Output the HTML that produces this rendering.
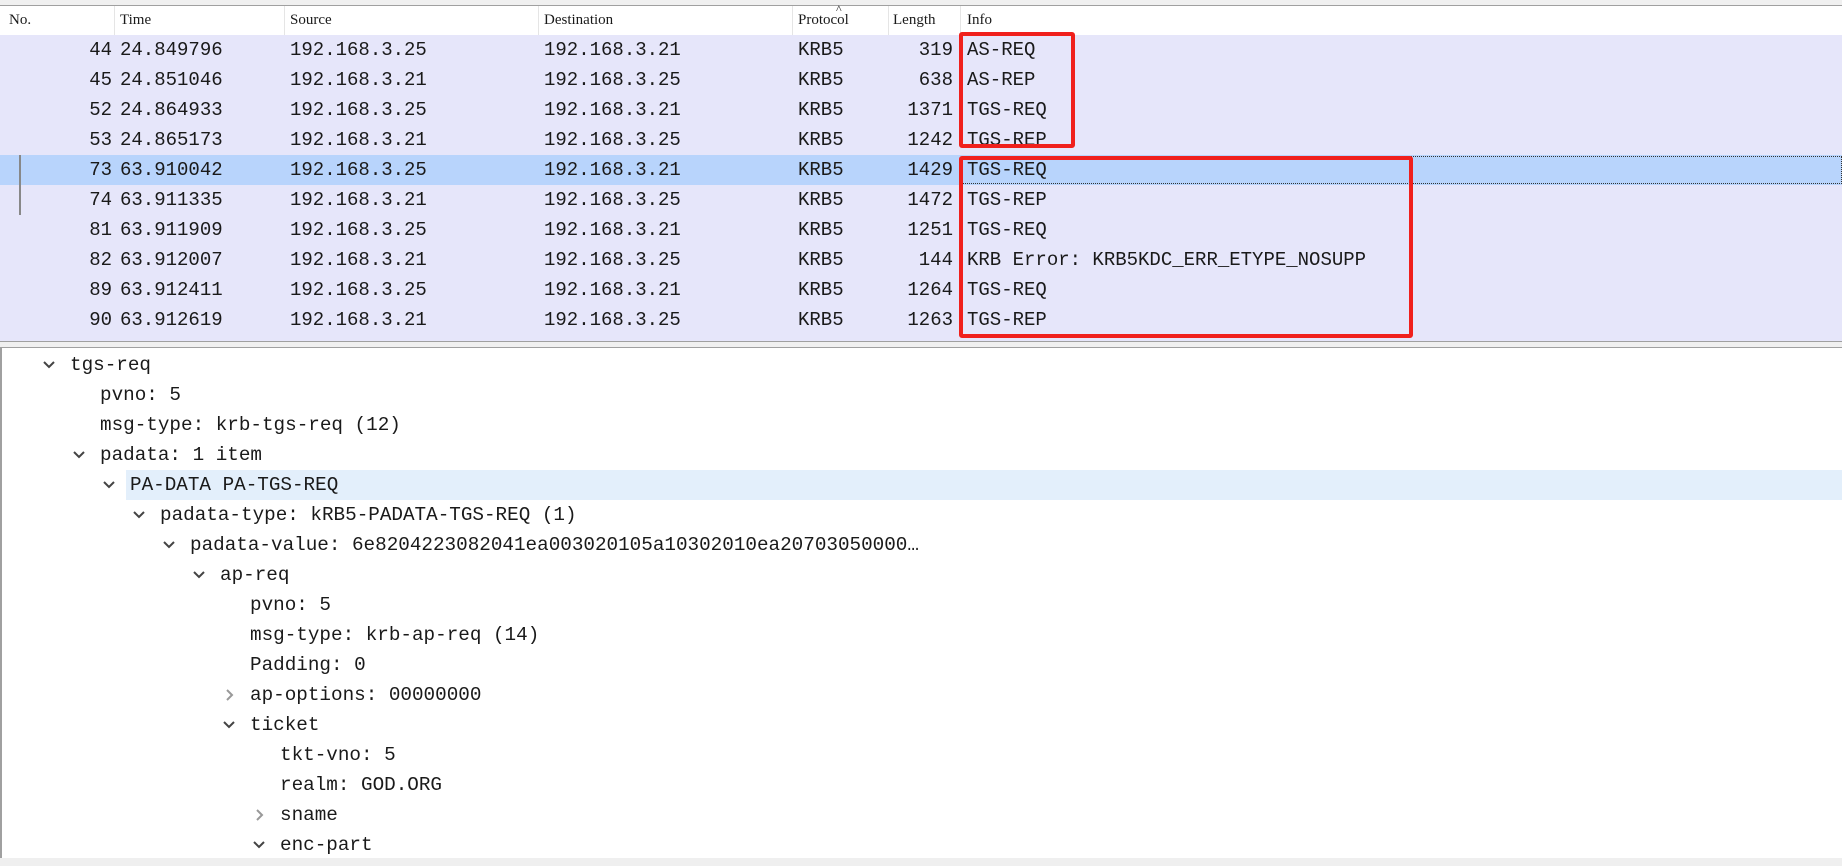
<!DOCTYPE html>
<html><head><meta charset="utf-8"><style>
*{margin:0;padding:0;box-sizing:border-box}
body{width:1842px;height:866px;overflow:hidden;background:#fff;position:relative;font-family:"Liberation Mono",monospace;color:#1a1a1a}
.top{position:absolute;left:0;top:0;width:1842px;height:6px;background:#f0f0f0;border-bottom:1px solid #a0a0a0}
.hdr{position:absolute;left:0;top:6px;width:1842px;height:29px;background:#fff;font-family:"Liberation Serif",serif;font-size:15px}
.hdr span{position:absolute;top:6px}
.sep{position:absolute;top:6px;width:1px;height:29px;background:#e5e5e5}
.list{position:absolute;left:0;top:35px;width:1842px;height:306px;overflow:hidden;background:#e6e6fa;font-size:19px}
.row{position:absolute;left:0;width:1842px;height:30px;line-height:30px;white-space:pre}
.row span{position:absolute;top:0}
.sel{background:#b8d4fc}
.r{text-align:right}
.split{position:absolute;left:0;top:341px;width:1842px;height:7px;background:#f0f0f0;border-top:1px solid #a0a0a0;border-bottom:1px solid #a0a0a0}
.det{position:absolute;left:0;top:348px;width:1842px;height:510px;border-left:2px solid #a0a0a0;font-size:19.3px}
.d{position:absolute;height:30px;line-height:30px;white-space:pre}
.box{position:absolute;border:4px solid #f0201c;border-radius:3px}
.bot{position:absolute;left:0;top:858px;width:1842px;height:8px;background:#efefef}
</style></head><body>
<div class="top"></div>
<div class="hdr">
<span style="left:9px">No.</span><span style="left:120px">Time</span><span style="left:290px">Source</span><span style="left:544px">Destination</span><span style="left:798px">Protocol</span><span style="left:893px">Length</span><span style="left:967px">Info</span>
<span style="left:836px;top:-4px;font-size:12px">^</span>
</div>
<div class="sep" style="left:114px"></div><div class="sep" style="left:284px"></div><div class="sep" style="left:538px"></div><div class="sep" style="left:792px"></div><div class="sep" style="left:888px"></div><div class="sep" style="left:960px"></div>
<div class="list">
<div class="row" style="top:0"><span class="r" style="left:40px;width:72px">44</span><span style="left:120px">24.849796</span><span style="left:290px">192.168.3.25</span><span style="left:544px">192.168.3.21</span><span style="left:798px">KRB5</span><span class="r" style="left:880px;width:73px">319</span><span style="left:967px">AS-REQ</span></div>
<div class="row" style="top:30px"><span class="r" style="left:40px;width:72px">45</span><span style="left:120px">24.851046</span><span style="left:290px">192.168.3.21</span><span style="left:544px">192.168.3.25</span><span style="left:798px">KRB5</span><span class="r" style="left:880px;width:73px">638</span><span style="left:967px">AS-REP</span></div>
<div class="row" style="top:60px"><span class="r" style="left:40px;width:72px">52</span><span style="left:120px">24.864933</span><span style="left:290px">192.168.3.25</span><span style="left:544px">192.168.3.21</span><span style="left:798px">KRB5</span><span class="r" style="left:880px;width:73px">1371</span><span style="left:967px">TGS-REQ</span></div>
<div class="row" style="top:90px"><span class="r" style="left:40px;width:72px">53</span><span style="left:120px">24.865173</span><span style="left:290px">192.168.3.21</span><span style="left:544px">192.168.3.25</span><span style="left:798px">KRB5</span><span class="r" style="left:880px;width:73px">1242</span><span style="left:967px">TGS-REP</span></div>
<div class="row sel" style="top:120px"><span class="r" style="left:40px;width:72px">73</span><span style="left:120px">63.910042</span><span style="left:290px">192.168.3.25</span><span style="left:544px">192.168.3.21</span><span style="left:798px">KRB5</span><span class="r" style="left:880px;width:73px">1429</span><span style="left:962px;width:880px;height:28px;top:1px;border:1px dotted #333;line-height:26px;padding-left:4px">TGS-REQ</span></div>
<div class="row" style="top:150px"><span class="r" style="left:40px;width:72px">74</span><span style="left:120px">63.911335</span><span style="left:290px">192.168.3.21</span><span style="left:544px">192.168.3.25</span><span style="left:798px">KRB5</span><span class="r" style="left:880px;width:73px">1472</span><span style="left:967px">TGS-REP</span></div>
<div class="row" style="top:180px"><span class="r" style="left:40px;width:72px">81</span><span style="left:120px">63.911909</span><span style="left:290px">192.168.3.25</span><span style="left:544px">192.168.3.21</span><span style="left:798px">KRB5</span><span class="r" style="left:880px;width:73px">1251</span><span style="left:967px">TGS-REQ</span></div>
<div class="row" style="top:210px"><span class="r" style="left:40px;width:72px">82</span><span style="left:120px">63.912007</span><span style="left:290px">192.168.3.21</span><span style="left:544px">192.168.3.25</span><span style="left:798px">KRB5</span><span class="r" style="left:880px;width:73px">144</span><span style="left:967px">KRB Error: KRB5KDC_ERR_ETYPE_NOSUPP</span></div>
<div class="row" style="top:240px"><span class="r" style="left:40px;width:72px">89</span><span style="left:120px">63.912411</span><span style="left:290px">192.168.3.25</span><span style="left:544px">192.168.3.21</span><span style="left:798px">KRB5</span><span class="r" style="left:880px;width:73px">1264</span><span style="left:967px">TGS-REQ</span></div>
<div class="row" style="top:270px"><span class="r" style="left:40px;width:72px">90</span><span style="left:120px">63.912619</span><span style="left:290px">192.168.3.21</span><span style="left:544px">192.168.3.25</span><span style="left:798px">KRB5</span><span class="r" style="left:880px;width:73px">1263</span><span style="left:967px">TGS-REP</span></div>
<div class="row" style="top:300px"><span class="r" style="left:40px;width:72px">91</span><span style="left:120px">63.912800</span><span style="left:290px">192.168.3.25</span><span style="left:544px">192.168.3.21</span><span style="left:798px">KRB5</span><span class="r" style="left:880px;width:73px">1264</span><span style="left:967px">TGS-REQ</span></div>
<div style="position:absolute;left:19px;top:120px;width:2px;height:60px;background:#888"></div>
</div>
<div class="split"></div>
<div class="det">
<div style="position:absolute;left:124px;top:122px;width:1718px;height:30px;background:#e3effb"></div>
</div>
<div id="tree"></div>
<div class="box" style="left:959px;top:32px;width:116px;height:116px"></div>
<div class="box" style="left:959px;top:156px;width:454px;height:182px"></div>
<div class="bot"></div>
<script>
var items=[[0,'d','tgs-req'],[1,'','pvno: 5'],[1,'','msg-type: krb-tgs-req (12)'],[1,'d','padata: 1 item'],[2,'d','PA-DATA PA-TGS-REQ'],[3,'d','padata-type: kRB5-PADATA-TGS-REQ (1)'],[4,'d','padata-value: 6e8204223082041ea003020105a10302010ea20703050000\u2026'],[5,'d','ap-req'],[6,'','pvno: 5'],[6,'','msg-type: krb-ap-req (14)'],[6,'','Padding: 0'],[6,'r','ap-options: 00000000'],[6,'d','ticket'],[7,'','tkt-vno: 5'],[7,'','realm: GOD.ORG'],[7,'r','sname'],[7,'d','enc-part']];
var h='';items.forEach(function(it,i){var x=70+30*it[0],y=350+30*i;
if(it[1]=='d')h+='<svg style="position:absolute;left:'+(x-27)+'px;top:'+(y+11)+'px" width="12" height="8"><path d="M1 1L6 6L11 1" fill="none" stroke="#444" stroke-width="2"/></svg>';
if(it[1]=='r')h+='<svg style="position:absolute;left:'+(x-24)+'px;top:'+(y+9)+'px" width="8" height="12"><path d="M1 1L6 6L1 11" fill="none" stroke="#999" stroke-width="2"/></svg>';
h+='<div class="d" style="font-family:\'Liberation Mono\',monospace;font-size:19.3px;left:'+x+'px;top:'+y+'px">'+it[2]+'</div>';});
document.getElementById('tree').innerHTML=h;
</script>
</body></html>
